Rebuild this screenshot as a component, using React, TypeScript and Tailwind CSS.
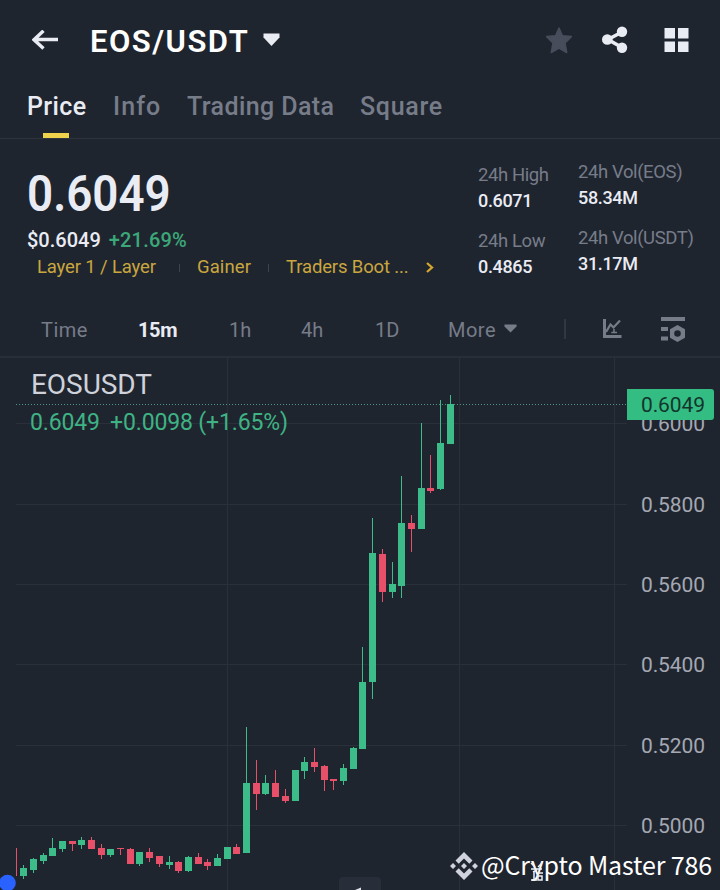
import { Fragment } from "react";

type Candle = [number, number, number, number, number, number];

// left edge, up (1) / down (0), wick top, body top, body bottom, wick bottom
const candles: Candle[] = [
  [20, 1, 865, 868, 876, 879],
  [30, 1, 858, 859, 870, 873],
  [40, 1, 853, 855, 861, 864],
  [49, 1, 838, 848, 856, 856],
  [59, 1, 841, 841, 849, 852],
  [69, 0, 841, 841, 844, 851],
  [78, 1, 837, 840, 845, 849],
  [88, 0, 837, 840, 849, 849],
  [98, 0, 844, 848, 855, 859],
  [107, 1, 849, 849, 855, 857],
  [117, 0, 848, 848, 849, 855],
  [127, 0, 848, 849, 864, 864],
  [136, 1, 852, 852, 864, 866],
  [146, 0, 848, 852, 858, 862],
  [156, 0, 856, 856, 864, 867],
  [166, 1, 856, 862, 865, 869],
  [175, 0, 861, 862, 871, 873],
  [185, 1, 856, 857, 871, 872],
  [195, 0, 853, 857, 864, 864],
  [204, 0, 859, 862, 866, 870],
  [214, 1, 854, 858, 866, 866],
  [224, 1, 847, 847, 859, 859],
  [233, 0, 844, 847, 854, 854],
  [243, 1, 727, 783, 853, 853],
  [253, 0, 760, 783, 794, 810],
  [262, 1, 775, 783, 794, 795],
  [272, 0, 770, 783, 797, 797],
  [282, 0, 789, 796, 801, 803],
  [292, 1, 770, 770, 801, 801],
  [301, 1, 757, 762, 771, 779],
  [311, 0, 748, 762, 767, 772],
  [321, 0, 765, 766, 780, 791],
  [330, 0, 779, 779, 781, 790],
  [340, 1, 764, 768, 781, 785],
  [350, 1, 747, 748, 769, 769],
  [359, 1, 647, 682, 749, 749],
  [369, 1, 518, 553, 682, 699],
  [379, 0, 549, 554, 592, 602],
  [389, 1, 562, 584, 592, 598],
  [398, 1, 476, 523, 586, 598],
  [408, 0, 515, 523, 529, 552],
  [418, 1, 423, 488, 529, 529],
  [427, 0, 455, 488, 491, 493],
  [437, 1, 400, 443, 489, 490],
  [447, 1, 395, 404, 444, 444],
];

const priceLevels = [
  { y: 423, label: "0.6000" },
  { y: 504, label: "0.5800" },
  { y: 584, label: "0.5600" },
  { y: 664, label: "0.5400" },
  { y: 745, label: "0.5200" },
  { y: 825, label: "0.5000" },
];

const Header = () => (
  <header className="flex h-20 items-center">
    <svg className="ml-8 shrink-0" width="26" height="20" viewBox="0 0 26 20" fill="none" stroke="#eaecf4" strokeWidth="3.4">
      <path d="M26 9.5H2M11.5 0.8L2 9.7L11.5 18.6" />
    </svg>
    <h1 className="ml-[32px] w-[161px] pt-[3px] text-[31px] leading-10 font-semibold tracking-[1.5px] whitespace-nowrap text-white">EOS/USDT</h1>
    <svg className="ml-3 shrink-0" width="17" height="14" viewBox="0 0 17 14" fill="#eaecf4">
      <path d="M0.5 0.5H16.5V4.5L8.5 13L0.5 4.5Z" />
    </svg>
    <svg className="ml-[265px] shrink-0" width="28" height="28" viewBox="0 0 28 28" fill="#474d5b" stroke="#474d5b" strokeWidth="1.5" strokeLinejoin="round">
      <path d="M14 2L17.4 9.8L26.3 10.6L20 16.9L21.7 26.5L14 22.2L6.3 26.5L8 16.9L1.7 10.6L10.6 9.8Z" />
    </svg>
    <svg className="ml-[28px] shrink-0" width="28" height="28" viewBox="0 0 28 28" fill="#eaecf4">
      <path d="M21 6L7 13.5L21 21.5" fill="none" stroke="#eaecf4" strokeWidth="3.6" />
      <circle cx="6.3" cy="13.5" r="5.3" />
      <circle cx="21" cy="5.7" r="5.2" />
      <circle cx="21" cy="21.7" r="5.2" />
    </svg>
    <svg className="ml-[35px] shrink-0" width="26" height="26" viewBox="0 0 26 26" fill="#eaecf4">
      <path d="M0.5 1H11V11.5H0.5ZM14 1H24.5V11.5H14ZM0.5 14.5H11V25H0.5ZM14 14.5H24.5V25H14Z" />
    </svg>
  </header>
);

const Tabs = () => (
  <nav className="flex h-[59px] border-b border-[#2e353f] pl-[27px] text-[25px] leading-[53px] font-medium whitespace-nowrap text-[#777c89]">
    <div className="flex w-[86px] flex-col">
      <span className="h-[53px] tracking-[0.4px] text-[#eaecf4]">Price</span>
      <span className="ml-4 h-[5px] w-[26px] bg-[#f0d14c]" />
    </div>
    <span className="w-[74px] tracking-[1.1px]">Info</span>
    <span className="w-[173px] tracking-[0.4px]">Trading Data</span>
    <span className="tracking-[0.7px]">Square</span>
  </nav>
);

const Stat = ({ label, value }: { label: string; value: string }) => (
  <div className="h-[66px] whitespace-nowrap">
    <p className="text-[18.5px] leading-[26px] tracking-[-0.4px] text-[#777c89]">{label}</p>
    <p className="text-[18px] leading-[26px] font-medium tracking-[-0.35px] text-[#eaecf4]">{value}</p>
  </div>
);

const Summary = () => (
  <section className="flex h-[165px]">
    <div className="w-[478px] pl-[27px] whitespace-nowrap">
      <p className="mt-[25px] h-[62px] w-40 origin-left scale-x-[0.915] text-[50px] leading-[60px] font-semibold text-[#eaecf4]">0.6049</p>
      <p className="h-[29px] text-[20px] leading-[28px] font-medium text-[#eaecf4]">
        $0.6049 <span className="ml-[3px] tracking-[0.2px] text-[#3ba879]">+21.69%</span>
      </p>
      <div className="ml-[10px] flex h-[26px] items-center text-[18.5px] tracking-[-0.15px] text-[#caa63f]">
        <span className="w-[142px]">Layer 1 / Layer</span>
        <span className="h-2 w-px bg-[#3d4450]" />
        <span className="ml-[17px] w-[71px] tracking-[0.1px]">Gainer</span>
        <span className="h-2 w-px bg-[#3d4450]" />
        <span className="ml-[17px] w-[140px]">Traders Boot ...</span>
        <svg className="mb-0.5" width="8" height="11" viewBox="0 0 8 11" fill="none" stroke="#d3a72f" strokeWidth="2.3">
          <path d="M1 1L6 5.5L1 10" />
        </svg>
      </div>
    </div>
    <div className="w-[100px] pt-[23px]">
      <Stat label="24h High" value="0.6071" />
      <Stat label="24h Low" value="0.4865" />
    </div>
    <div className="pt-[20px]">
      <Stat label="24h Vol(EOS)" value="58.34M" />
      <Stat label="24h Vol(USDT)" value="31.17M" />
    </div>
  </section>
);

const Intervals = () => (
  <div className="flex h-[52px] items-center pl-[41px] text-[20px] whitespace-nowrap text-[#777c89]">
    <span className="w-[97px] tracking-[0.5px]">Time</span>
    <span className="w-[91px] font-bold tracking-[-0.4px] text-[#eaecf4]">15m</span>
    <span className="w-[72px]">1h</span>
    <span className="w-[74px]">4h</span>
    <span className="w-[73px]">1D</span>
    <span className="w-[56px] tracking-[0.5px]">More</span>
    <svg className="mb-[3px]" width="13" height="9" viewBox="0 0 13 9" fill="#777c89">
      <path d="M0.5 0.5H12.5V2.5L6.5 8.5L0.5 2.5Z" />
    </svg>
    <span className="mb-[3px] ml-[47px] h-5 w-0.5 bg-[#303742]" />
    <svg className="mb-[3px] ml-9" width="20" height="20" viewBox="0 0 20 20" fill="none" stroke="#777c89" strokeWidth="3">
      <path d="M2.5 0V17.5H19.5" />
      <path d="M4 13L8.5 5.5L11.5 8.5L18 1.5" strokeWidth="2.2" />
      <path d="M9.3 13.5H15M12 10V13.5" strokeWidth="1.5" />
    </svg>
    <svg className="mb-[3px] ml-[38px]" width="26" height="26" viewBox="0 0 26 26" fill="#777c89">
      <path d="M1 1H25V5H1ZM1 11H8V15H1ZM1 20.5H8V24.5H1Z" />
      <path fillRule="evenodd" d="M17.5 9L25 13.2V21.8L17.5 26L10 21.8V13.2ZM17.5 14.2A3.3 3.3 0 1 0 17.5 20.8A3.3 3.3 0 1 0 17.5 14.2Z" />
    </svg>
  </div>
);

const Chart = () => (
  <svg className="block" width="720" height="534" viewBox="0 356 720 534" fontFamily="Roboto, sans-serif">
    <rect x="0" y="356" width="720" height="2" fill="#272e38" />
    {[227, 459, 614].map((x) => (
      <rect key={x} x={x} y="358" width="1" height="532" fill="#29303a" />
    ))}
    {priceLevels.map(({ y, label }) => (
      <Fragment key={label}>
        <rect x="16" y={y} width="611" height="1" fill="#29303a" />
        <text x="641" y={y + 8} fontSize="21" textLength="64" fill="#a4a8b2">{label}</text>
      </Fragment>
    ))}
    <path d="M16 404.5H627" stroke="#4d9484" strokeDasharray="1 2" />
    <rect x="16" y="848" width="1" height="28" fill="#e8506a" />
    {candles.map(([x, up, high, top, bottom, low]) => (
      <g key={x} fill={up ? "#3cbc88" : "#e8506a"}>
        <rect x={x + 3} y={high} width="1" height={low - high} />
        <rect x={x} y={top} width="7" height={bottom - top} />
      </g>
    ))}
    <text x="31" y="394" fontSize="28" textLength="121" fill="#cfd2da">EOSUSDT</text>
    <g fontSize="23" fill="#3eb384">
      <text x="30" y="430" textLength="70">0.6049</text>
      <text x="110" y="430" textLength="178">+0.0098 (+1.65%)</text>
    </g>
    <path d="M627 389H711Q714 389 714 392V417Q714 420 711 420H627Z" fill="#34bd83" />
    <text x="641" y="412" fontSize="21" textLength="64" fill="#12352d">0.6049</text>
    <circle cx="7.5" cy="883" r="8.3" fill="#2962ff" />
    <path d="M339 890V881Q339 877 343 877H377Q381 877 381 881V890Z" fill="#282e39" />
    <path d="M355 890L361 887.5V890Z" fill="#dfe2ea" />
  </svg>
);

const Watermark = () => (
  <div className="absolute top-[848px] left-[450px] flex h-9 items-center text-white">
    <svg width="28" height="28" viewBox="0 0 28 28" fill="#d0d3de">
      <path d="M14 0L22.5 8.5L19.3 11.7L14 6.4L8.7 11.7L5.5 8.5Z" />
      <path d="M14 28L22.5 19.5L19.3 16.3L14 21.6L8.7 16.3L5.5 19.5Z" />
      <path d="M3 11L6 14L3 17L0 14ZM14 11L17 14L14 17L11 14ZM25 11L28 14L25 17L22 14Z" />
    </svg>
    <span className="mb-1 ml-[3px] font-['Noto_Sans_CJK_SC',sans-serif] text-[25px] leading-9 tracking-[-0.12px] whitespace-nowrap">@Crypto Master 786</span>
    <svg className="absolute top-[14px] left-[80px]" width="14" height="19" viewBox="0 0 14 19" fill="none" stroke="#eef0f5" strokeWidth="1.5">
      <path d="M1 1L5 5M12 1L8 5M1 7H12M3 10L7 8M4 10V18M1 18H7M8 11H13M8 14H12V18H8Z" />
    </svg>
  </div>
);

export default function App() {
  return (
    <main className="relative h-[890px] w-[720px] overflow-hidden bg-[#1f252f] font-[Roboto,sans-serif]">
      <Header />
      <Tabs />
      <Summary />
      <Intervals />
      <Chart />
      <Watermark />
    </main>
  );
}
